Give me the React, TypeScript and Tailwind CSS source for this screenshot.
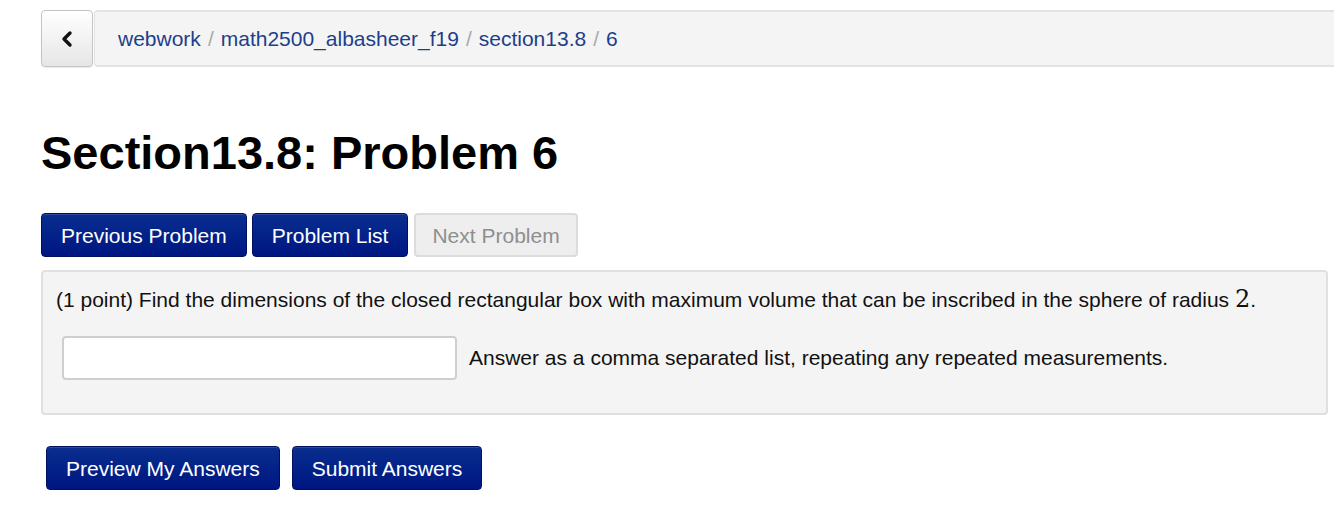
import React from "react";

const font = { fontFamily: '"Liberation Sans", Arial, sans-serif' };

function NavyButton({ children, className = "" }: { children: React.ReactNode; className?: string }) {
  return (
    <button
      className={
        "h-[44px] px-[19px] rounded-[4px] border border-[#00105e] bg-gradient-to-b from-[#0a2d8e] to-[#001582] text-white text-[21px] leading-none shadow-[inset_0_1px_0_rgba(255,255,255,0.15)] " +
        className
      }
    >
      {children}
    </button>
  );
}

export default function App() {
  return (
    <div className="min-h-[513px] bg-white text-[#111] pl-[41px] pt-[10px]" style={font}>
      {/* breadcrumb */}
      <div className="flex h-[57px]">
        <button className="w-[52px] h-full flex items-center justify-center rounded-[4px] border border-[#c4c4c4] bg-gradient-to-b from-white to-[#e6e6e6] shadow-[0_1px_1px_rgba(0,0,0,0.08)]">
          <svg width="14" height="18" viewBox="0 0 14 18">
            <path d="M10 3 L4 9 L10 15" fill="none" stroke="#111" strokeWidth="3.4" strokeLinecap="round" strokeLinejoin="round" />
          </svg>
        </button>
        <div className="flex-1 ml-[1px] flex items-center bg-[#f4f4f4] border-y-2 border-l border-[#e3e3e3] rounded-l-[4px] pl-[23px] text-[21px] text-[#1d3f8b]">
          <span>webwork</span>
          <span className="text-[#aaa] mx-[7px]">/</span>
          <span>math2500_albasheer_f19</span>
          <span className="text-[#aaa] mx-[7px]">/</span>
          <span>section13.8</span>
          <span className="text-[#aaa] mx-[7px]">/</span>
          <span>6</span>
        </div>
      </div>

      {/* title */}
      <h1 className="mt-[59px] text-[47px] leading-[53px] font-bold text-black">Section13.8: Problem 6</h1>

      {/* nav buttons */}
      <div className="mt-[34px] flex">
        <NavyButton>Previous Problem</NavyButton>
        <NavyButton className="ml-[5px] px-[18px]">Problem List</NavyButton>
        <button className="ml-[6px] h-[44px] px-[16px] rounded-[4px] border-2 border-[#dcdcdc] bg-[#eeeeee] text-[#8f8f8f] text-[21px] leading-none">
          Next Problem
        </button>
      </div>

      {/* problem box */}
      <div className="mt-[13px] mr-[6px] h-[145px] rounded-[4px] border-2 border-[#e0e0e0] bg-[#f4f4f4] px-[13px] pt-[13px]">
        <p className="text-[21px] leading-[28px] text-[#111]">
          (1 point) Find the dimensions of the closed rectangular box with maximum volume that can be inscribed in the sphere of radius{" "}
          <span className="text-[24px]" style={{ fontFamily: '"DejaVu Serif", "Liberation Serif", serif' }}>2</span>.
        </p>
        <div className="mt-[22px] flex items-center">
          <input
            type="text"
            className="ml-[6px] w-[395px] h-[44px] rounded-[4px] border-2 border-[#cfcfcf] bg-white"
          />
          <span className="ml-[12px] text-[21px] text-[#111]">
            Answer as a comma separated list, repeating any repeated measurements.
          </span>
        </div>
      </div>

      {/* submit */}
      <div className="mt-[31px] ml-[5px] flex">
        <NavyButton>Preview My Answers</NavyButton>
        <NavyButton className="ml-[12px]">Submit Answers</NavyButton>
      </div>
    </div>
  );
}
